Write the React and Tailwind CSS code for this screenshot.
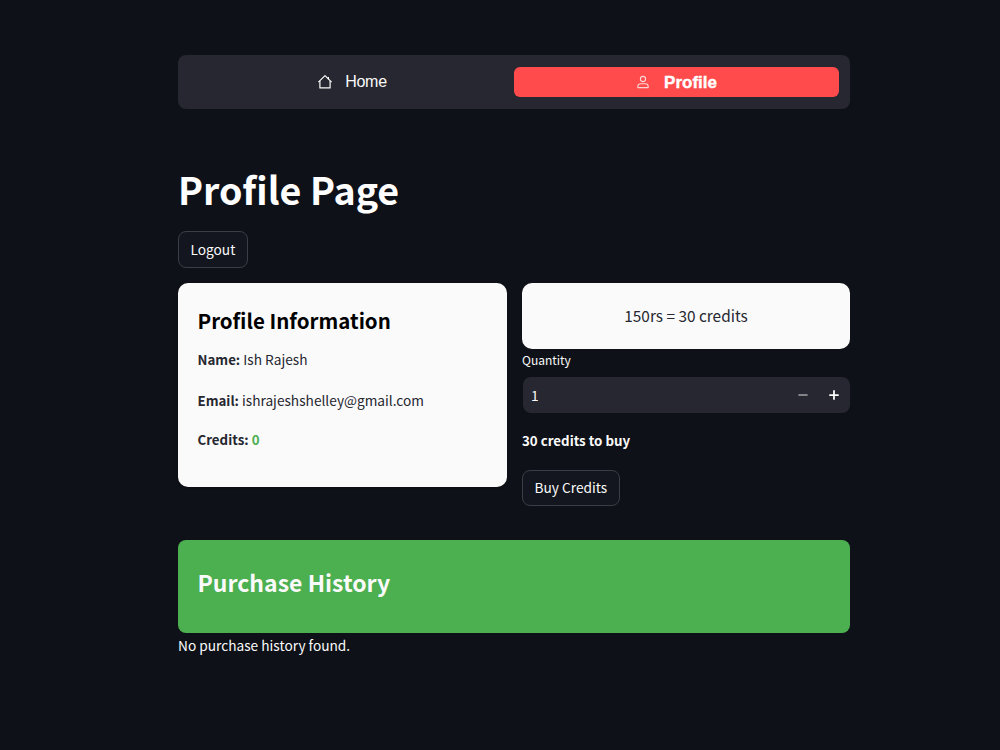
import { Minus, Plus } from "lucide-react";

const sans = "font-['Noto_Sans_CJK_SC',sans-serif]";

function HomeIcon() {
  return (
    <svg width="16" height="16" viewBox="0 0 16 16" fill="none" stroke="currentColor" strokeWidth="1.2" strokeLinejoin="round">
      <path d="M1.4 8.2 8 1.6l6.6 6.6" />
      <path d="M2.9 6.9v7h10.2v-7" />
      <path d="M11.4 3v2.2" />
    </svg>
  );
}

function PersonIcon() {
  return (
    <svg width="14" height="14" viewBox="0 0 14 14" fill="none" stroke="currentColor" strokeWidth="1.1">
      <circle cx="7" cy="4" r="2.6" />
      <path d="M1.8 12.6v-1c0-1.6 1.3-2.8 2.9-2.8h4.6c1.6 0 2.9 1.2 2.9 2.8v1z" strokeLinejoin="round" />
    </svg>
  );
}

function OutlineButton({ children, className }) {
  return (
    <button
      type="button"
      className={`flex items-center rounded-lg border border-[#3b3d47] bg-[#13161e] px-[11.5px] text-[13.7px] leading-none text-[#fafafa] ${className}`}
    >
      {children}
    </button>
  );
}

export default function App() {
  return (
    <div className={`min-h-[750px] bg-[#0e1117] ${sans}`}>
      <div className="mx-auto w-[672px] translate-x-[14px] pt-[55px]">
        <nav className="flex h-[54px] items-center gap-[8px] rounded-lg bg-[#262730] px-[11px] font-['Liberation_Sans',sans-serif] text-base">
          <a className="flex h-[30px] flex-1 items-center justify-center gap-[12px] pl-[9px] text-[#fafafa]">
            <HomeIcon />
            <span className="tracking-[-0.3px]">Home</span>
          </a>
          <a className="flex h-[30px] w-[325px] items-center justify-center gap-[14px] rounded-md bg-[#ff4b4b] font-bold text-white">
            <span className="text-[#fbd5d5]">
              <PersonIcon />
            </span>
            <span className="pt-px text-[17px] [-webkit-text-stroke:0.4px_white]">Profile</span>
          </a>
        </nav>

        <h1 className="mt-[57px] text-[37.6px] leading-[46px] font-bold text-white">Profile Page</h1>

        <div className="mt-[19px] flex">
          <OutlineButton className="h-[37px]">Logout</OutlineButton>
        </div>

        <div className="mt-[15px] flex items-start gap-[15px]">
          <section className="h-[204px] w-[329px] rounded-[10px] bg-[#fafafa] pl-[19.5px] pr-[20px] pt-[22px] text-[#262730] shadow-[0_1px_3px_rgba(0,0,0,0.3)]">
            <h3 className="text-[20.5px] leading-[30px] font-bold text-black">Profile Information</h3>
            <p className="mt-[13px] text-[13.7px] leading-[22px]">
              <strong className="text-[13.3px] font-bold">Name:</strong> Ish Rajesh
            </p>
            <p className="mt-[18px] text-[13.7px] leading-[22px]">
              <strong className="text-[13.3px] font-bold">Email:</strong> ishrajeshshelley@gmail.com
            </p>
            <p className="mt-[16px] text-[13.7px] leading-[22px]">
              <strong className="text-[13.3px] font-bold">Credits:</strong>{" "}
              <span className="text-[13.3px] font-bold text-[#4caf50]">0</span>
            </p>
          </section>

          <section className="w-[328px]">
            <div className="flex h-[66px] items-center justify-center rounded-[10px] bg-[#fafafa] text-[15.4px] text-[#262730]">
              150rs = 30 credits
            </div>
            <label className="mt-[2px] block text-[12px] leading-[18px] text-[#fafafa]">Quantity</label>
            <div className="mt-[8px] ml-[1px] flex h-[36px] w-[327px] items-center rounded-lg bg-[#262730] pl-[8px] pr-[9px] text-[13.7px] text-[#fafafa]">
              <span className="flex-1">1</span>
              <Minus size={14} strokeWidth={2.5} className="text-[#a3a3a8]" />
              <Plus size={14} strokeWidth={3} className="ml-[17px] text-white" />
            </div>
            <p className="mt-[17px] text-[13.3px] leading-[22px] font-bold text-[#fafafa]">30 credits to buy</p>
            <div className="mt-[18px] flex">
              <OutlineButton className="h-[36px]">Buy Credits</OutlineButton>
            </div>
          </section>
        </div>

        <section className="mt-[34px] flex h-[93px] items-center rounded-lg bg-[#4caf50] pl-[19.5px] pr-[20px] pb-[9px]">
          <h3 className="text-[23px] leading-[34px] font-bold text-[#fafafa]">Purchase History</h3>
        </section>
        <p className="text-[13.7px] leading-[24px] text-[#fafafa]">No purchase history found.</p>
      </div>
    </div>
  );
}
